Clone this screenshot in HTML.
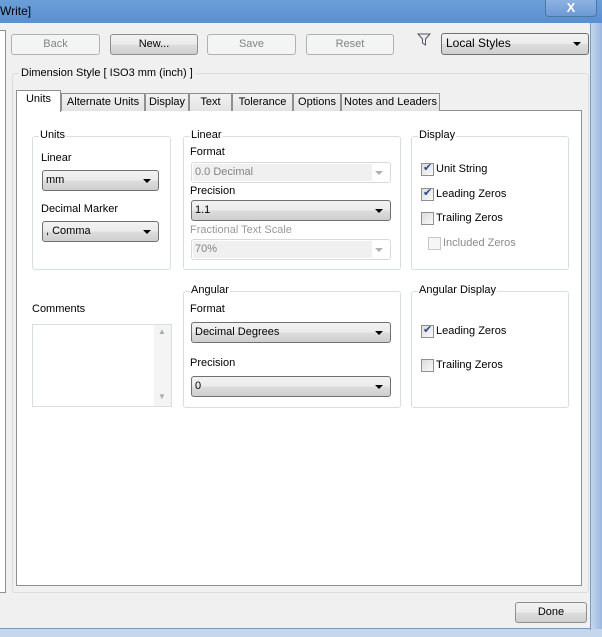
<!DOCTYPE html>
<html><head><style>
*{box-sizing:border-box;margin:0;padding:0}
body{width:602px;height:637px;overflow:hidden;background:#f0f0f0;font-family:"Liberation Sans",sans-serif;font-size:11px;color:#000;position:relative}
.a{position:absolute}
.title{left:0;top:0;width:602px;height:23px;background:linear-gradient(#6b9fd8,#5a8fd0);}
.btn{position:absolute;height:21px;border:1px solid #8e8f8f;border-radius:3px;background:linear-gradient(#f2f2f2,#ebebeb 50%,#dddddd 51%,#cfcfcf);text-align:center;line-height:19px;font-size:11px}
.btn.dis{border-color:#adb2b5;background:#f4f4f4;color:#838383}
.grp{position:absolute;border:1px solid #d5dfe5;border-radius:3px}
.lg{position:absolute;top:-8px;left:6px;background:#fff;padding:0 1px;font-size:11px}
.cb{position:absolute;height:21px;border:1px solid #707070;border-radius:3px;background:linear-gradient(#f2f2f2,#ebebeb 50%,#dddddd 51%,#cfcfcf);padding-left:3px;line-height:19px}
.cb:after{content:"";position:absolute;right:7px;top:8px;border:4px solid transparent;border-top:4px solid #000;border-bottom:0}
.cb.dis{border-color:#d9d9d9;background:#fff;color:#838383}
.cb.dis:before{content:"";position:absolute;left:1px;top:1px;right:18px;bottom:1px;background:#f0f0f0}
.cb.dis span{position:relative}
.cb.dis:after{border-top-color:#b0b0b0}
.t{position:absolute;font-size:11px}
.ck{position:absolute;width:13px;height:13px;border:1px solid #8f8f8f;background:linear-gradient(135deg,#dcdcdc,#fafafa)}
.ck.on:after{content:"✔";position:absolute;left:1px;top:-3px;font-size:11px;color:#2a4a8a}
.tab{position:absolute;top:93px;height:18px;border:1px solid #8e8f8f;border-bottom:none;background:linear-gradient(#f2f2f2,#e3e3e3);text-align:center;line-height:16px}
</style></head><body>
<div class="a title"></div>
<div class="a" style="left:0;top:4px;font-size:12px;color:#000">Write]</div>
<div class="a" style="left:545px;top:0;width:52px;height:17px;border:1px solid #4a76a8;border-top:none;border-radius:0 0 4px 4px;background:linear-gradient(#8db2e0,#6d9ad4);color:#fff;text-align:center;font-weight:bold;font-size:13px;line-height:15px">X</div>
<div class="a" style="left:591px;top:23px;width:11px;height:614px;background:linear-gradient(90deg,#c4d7ec,#9ab9df)"></div>
<div class="a" style="left:0;top:629px;width:602px;height:8px;background:#c4d7ec"></div>
<div class="a" style="left:590px;top:23px;width:1px;height:607px;background:#7d99bb"></div>
<div class="a" style="left:0;top:628px;width:591px;height:1px;background:#7d99bb"></div>
<div class="a" style="left:0;top:30px;width:6px;height:563px;border:1px solid #8e8f8f;border-left:none;background:#fff"></div>

<div class="btn dis" style="left:11px;top:34px;width:89px">Back</div>
<div class="btn" style="left:110px;top:34px;width:88px">New...</div>
<div class="btn dis" style="left:207px;top:34px;width:89px">Save</div>
<div class="btn dis" style="left:306px;top:34px;width:88px">Reset</div>
<svg class="a" style="left:417px;top:33px" width="14" height="14" viewBox="0 0 14 14"><path d="M1 1H13L8.5 6V12L5.5 10V6Z" fill="#eef" stroke="#555" stroke-width="1"/></svg>
<div class="cb" style="left:441px;top:33px;width:148px;height:22px;padding-left:4px;font-size:12px">Local Styles</div>

<div class="grp" style="left:12px;top:73px;width:577px;height:520px;border-color:#dcdcdc;background:#f0f0f0"></div>
<div class="t" style="left:19px;top:67px;background:#f0f0f0;padding:0 2px">Dimension Style [ ISO3 mm (inch) ]</div>

<div class="a" style="left:16px;top:110px;width:566px;height:476px;border:1px solid #8e8f8f;background:#fff"></div>
<div class="tab" style="left:16px;top:90px;width:45px;height:22px;background:#fff;z-index:2">Units</div>
<div class="tab" style="left:61px;width:84px">Alternate Units</div>
<div class="tab" style="left:145px;width:44px">Display</div>
<div class="tab" style="left:189px;width:43px">Text</div>
<div class="tab" style="left:232px;width:61px">Tolerance</div>
<div class="tab" style="left:293px;width:48px">Options</div>
<div class="tab" style="left:341px;width:99px">Notes and Leaders</div>

<div class="grp" style="left:32px;top:136px;width:139px;height:134px"><span class="lg">Units</span></div>
<div class="t" style="left:41px;top:152px">Linear</div>
<div class="cb" style="left:42px;top:170px;width:117px">mm</div>
<div class="t" style="left:41px;top:203px">Decimal Marker</div>
<div class="cb" style="left:42px;top:221px;width:117px">, Comma</div>

<div class="grp" style="left:183px;top:136px;width:218px;height:134px"><span class="lg">Linear</span></div>
<div class="t" style="left:190px;top:146px">Format</div>
<div class="cb dis" style="left:191px;top:162px;width:200px"><span>0.0 Decimal</span></div>
<div class="t" style="left:190px;top:185px">Precision</div>
<div class="cb" style="left:191px;top:200px;width:200px">1.1</div>
<div class="t" style="left:190px;top:224px;color:#9a9a9a">Fractional Text Scale</div>
<div class="cb dis" style="left:191px;top:239px;width:200px"><span>70%</span></div>

<div class="grp" style="left:411px;top:136px;width:158px;height:134px"><span class="lg">Display</span></div>
<div class="ck on" style="left:421px;top:163px"></div><div class="t" style="left:436px;top:163px">Unit String</div>
<div class="ck on" style="left:421px;top:188px"></div><div class="t" style="left:436px;top:188px">Leading Zeros</div>
<div class="ck" style="left:421px;top:212px"></div><div class="t" style="left:436px;top:212px">Trailing Zeros</div>
<div class="ck" style="left:428px;top:237px;border-color:#c8c8c8;background:#f6f6f6"></div><div class="t" style="left:443px;top:237px;color:#8a8a8a">Included Zeros</div>

<div class="t" style="left:32px;top:303px">Comments</div>
<div class="a" style="left:32px;top:324px;width:140px;height:83px;border:1px solid #d5dfe5"></div>
<div class="a" style="left:154px;top:325px;width:17px;height:81px;background:#f4f4f4"></div>
<div class="t" style="left:158px;top:327px;color:#aaa;font-size:8px">▲</div>
<div class="t" style="left:158px;top:392px;color:#aaa;font-size:8px">▼</div>

<div class="grp" style="left:183px;top:291px;width:218px;height:117px"><span class="lg">Angular</span></div>
<div class="t" style="left:190px;top:303px">Format</div>
<div class="cb" style="left:191px;top:322px;width:200px">Decimal Degrees</div>
<div class="t" style="left:190px;top:357px">Precision</div>
<div class="cb" style="left:191px;top:376px;width:200px">0</div>

<div class="grp" style="left:411px;top:291px;width:158px;height:117px"><span class="lg">Angular Display</span></div>
<div class="ck on" style="left:421px;top:325px"></div><div class="t" style="left:436px;top:325px">Leading Zeros</div>
<div class="ck" style="left:421px;top:359px"></div><div class="t" style="left:436px;top:359px">Trailing Zeros</div>

<div class="btn" style="left:515px;top:602px;width:72px;height:21px">Done</div>
</body></html>
